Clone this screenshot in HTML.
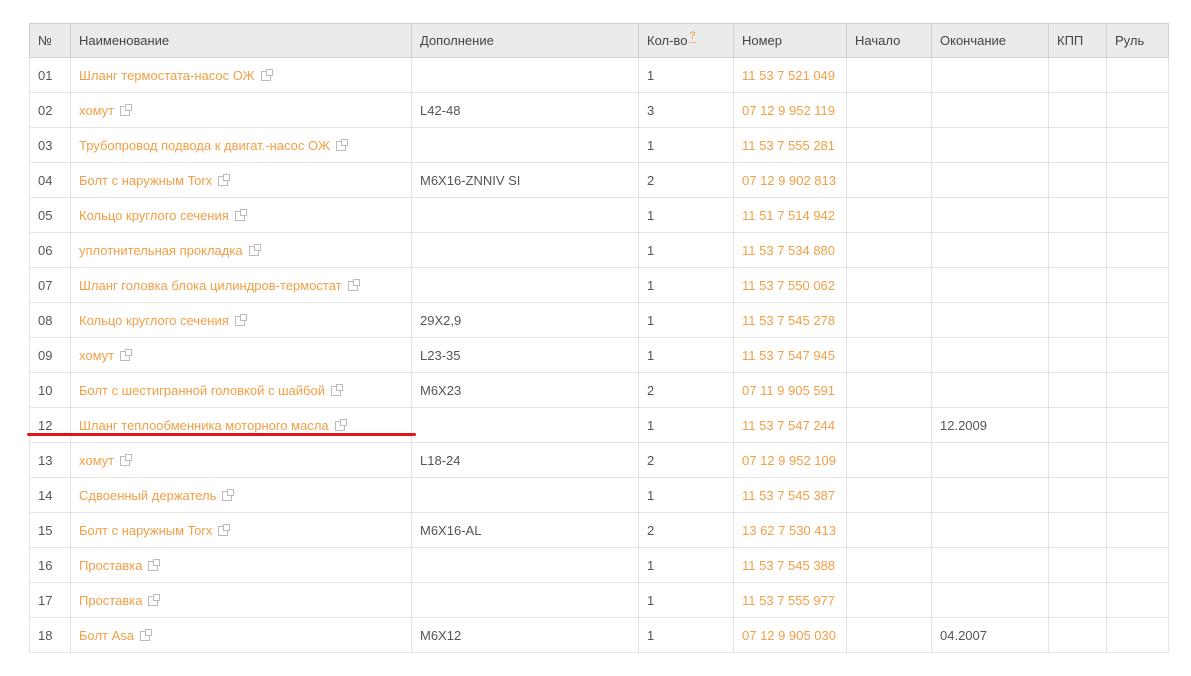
<!DOCTYPE html>
<html><head><meta charset="utf-8"><style>
body{margin:0;background:#fff;font-family:"Liberation Sans",sans-serif;font-size:13px;color:#555;position:relative;width:1191px;height:676px;overflow:hidden}
table{position:absolute;left:29px;top:23px;border-collapse:collapse;table-layout:fixed;width:1139px}
td,th{border:1px solid #e3e3e3;height:34px;padding:0 0 0 8px;text-align:left;font-weight:normal;white-space:nowrap;overflow:hidden}
th{background:#ebebeb;border-color:#d0d0d0;color:#444;height:33px}
a{color:#f29f45;text-decoration:none}
.i{display:inline-block;width:8px;height:8px;border:1px solid #bbb;margin-left:6px;position:relative;top:0px;vertical-align:middle}
.i:after{content:"";position:absolute;right:-3px;top:-3px;width:5px;height:5px;border:1px solid #bbb;background:#fff}
.q{color:#f0993a;font-size:11px;border-bottom:1px dotted #f0993a;position:relative;top:-6px;margin-left:2px}
.red{position:absolute;left:27px;top:433px;width:389px;height:3px;background:#e5141b;border-radius:2px}
</style></head><body>
<table>
<colgroup><col style="width:41px"><col style="width:341px"><col style="width:227px"><col style="width:95px"><col style="width:113px"><col style="width:85px"><col style="width:117px"><col style="width:58px"><col style="width:62px"></colgroup>
<tr><th>№</th><th>Наименование</th><th>Дополнение</th><th>Кол-во<span class="q">?</span></th><th>Номер</th><th>Начало</th><th>Окончание</th><th>КПП</th><th>Руль</th></tr>
<tr><td>01</td><td><a>Шланг термостата-насос ОЖ</a><span class="i"></span></td><td></td><td>1</td><td><a>11 53 7 521 049</a></td><td></td><td></td><td></td><td></td></tr>
<tr><td>02</td><td><a>хомут</a><span class="i"></span></td><td>L42-48</td><td>3</td><td><a>07 12 9 952 119</a></td><td></td><td></td><td></td><td></td></tr>
<tr><td>03</td><td><a>Трубопровод подвода к двигат.-насос ОЖ</a><span class="i"></span></td><td></td><td>1</td><td><a>11 53 7 555 281</a></td><td></td><td></td><td></td><td></td></tr>
<tr><td>04</td><td><a>Болт с наружным Torx</a><span class="i"></span></td><td>M6X16-ZNNIV SI</td><td>2</td><td><a>07 12 9 902 813</a></td><td></td><td></td><td></td><td></td></tr>
<tr><td>05</td><td><a>Кольцо круглого сечения</a><span class="i"></span></td><td></td><td>1</td><td><a>11 51 7 514 942</a></td><td></td><td></td><td></td><td></td></tr>
<tr><td>06</td><td><a>уплотнительная прокладка</a><span class="i"></span></td><td></td><td>1</td><td><a>11 53 7 534 880</a></td><td></td><td></td><td></td><td></td></tr>
<tr><td>07</td><td><a>Шланг головка блока цилиндров-термостат</a><span class="i"></span></td><td></td><td>1</td><td><a>11 53 7 550 062</a></td><td></td><td></td><td></td><td></td></tr>
<tr><td>08</td><td><a>Кольцо круглого сечения</a><span class="i"></span></td><td>29X2,9</td><td>1</td><td><a>11 53 7 545 278</a></td><td></td><td></td><td></td><td></td></tr>
<tr><td>09</td><td><a>хомут</a><span class="i"></span></td><td>L23-35</td><td>1</td><td><a>11 53 7 547 945</a></td><td></td><td></td><td></td><td></td></tr>
<tr><td>10</td><td><a>Болт с шестигранной головкой с шайбой</a><span class="i"></span></td><td>M6X23</td><td>2</td><td><a>07 11 9 905 591</a></td><td></td><td></td><td></td><td></td></tr>
<tr><td>12</td><td><a>Шланг теплообменника моторного масла</a><span class="i"></span></td><td></td><td>1</td><td><a>11 53 7 547 244</a></td><td></td><td>12.2009</td><td></td><td></td></tr>
<tr><td>13</td><td><a>хомут</a><span class="i"></span></td><td>L18-24</td><td>2</td><td><a>07 12 9 952 109</a></td><td></td><td></td><td></td><td></td></tr>
<tr><td>14</td><td><a>Сдвоенный держатель</a><span class="i"></span></td><td></td><td>1</td><td><a>11 53 7 545 387</a></td><td></td><td></td><td></td><td></td></tr>
<tr><td>15</td><td><a>Болт с наружным Torx</a><span class="i"></span></td><td>M6X16-AL</td><td>2</td><td><a>13 62 7 530 413</a></td><td></td><td></td><td></td><td></td></tr>
<tr><td>16</td><td><a>Проставка</a><span class="i"></span></td><td></td><td>1</td><td><a>11 53 7 545 388</a></td><td></td><td></td><td></td><td></td></tr>
<tr><td>17</td><td><a>Проставка</a><span class="i"></span></td><td></td><td>1</td><td><a>11 53 7 555 977</a></td><td></td><td></td><td></td><td></td></tr>
<tr><td>18</td><td><a>Болт Asa</a><span class="i"></span></td><td>M6X12</td><td>1</td><td><a>07 12 9 905 030</a></td><td></td><td>04.2007</td><td></td><td></td></tr>
</table>
<div class="red"></div>
</body></html>
